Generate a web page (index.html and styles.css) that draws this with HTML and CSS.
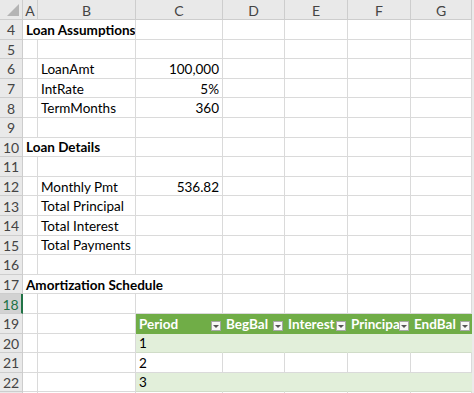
FILE: index.html
```html
<!DOCTYPE html>
<html>
<head>
    <title>Loan Amortization</title>
    <link rel="stylesheet" href="styles.css">
</head>
<body>
    <div class="sheet">
        <div class="corner"><svg width="12" height="12" viewBox="0 0 12 12"><polygon points="12,0 12,12 0,12" fill="#b4b4b4"/></svg></div>
        <div class="col-head">A</div>
        <div class="col-head">B</div>
        <div class="col-head">C</div>
        <div class="col-head">D</div>
        <div class="col-head">E</div>
        <div class="col-head">F</div>
        <div class="col-head">G</div>

        <div class="row-head">4</div>
        <div class="cell bold span2">Loan Assumptions</div>
        <div class="cell"></div><div class="cell"></div><div class="cell"></div><div class="cell"></div><div class="cell"></div>

        <div class="row-head">5</div>
        <div class="cell"></div><div class="cell"></div><div class="cell"></div><div class="cell"></div><div class="cell"></div><div class="cell"></div><div class="cell"></div>

        <div class="row-head">6</div>
        <div class="cell"></div><div class="cell">LoanAmt</div><div class="cell num">100,000</div>
        <div class="cell"></div><div class="cell"></div><div class="cell"></div><div class="cell"></div>

        <div class="row-head">7</div>
        <div class="cell"></div><div class="cell">IntRate</div><div class="cell num">5%</div>
        <div class="cell"></div><div class="cell"></div><div class="cell"></div><div class="cell"></div>

        <div class="row-head">8</div>
        <div class="cell"></div><div class="cell">TermMonths</div><div class="cell num">360</div>
        <div class="cell"></div><div class="cell"></div><div class="cell"></div><div class="cell"></div>

        <div class="row-head">9</div>
        <div class="cell"></div><div class="cell"></div><div class="cell"></div><div class="cell"></div><div class="cell"></div><div class="cell"></div><div class="cell"></div>

        <div class="row-head">10</div>
        <div class="cell bold span2">Loan Details</div>
        <div class="cell"></div><div class="cell"></div><div class="cell"></div><div class="cell"></div><div class="cell"></div>

        <div class="row-head">11</div>
        <div class="cell"></div><div class="cell"></div><div class="cell"></div><div class="cell"></div><div class="cell"></div><div class="cell"></div><div class="cell"></div>

        <div class="row-head">12</div>
        <div class="cell"></div><div class="cell">Monthly Pmt</div><div class="cell num">536.82</div>
        <div class="cell"></div><div class="cell"></div><div class="cell"></div><div class="cell"></div>

        <div class="row-head">13</div>
        <div class="cell"></div><div class="cell">Total Principal</div><div class="cell"></div>
        <div class="cell"></div><div class="cell"></div><div class="cell"></div><div class="cell"></div>

        <div class="row-head">14</div>
        <div class="cell"></div><div class="cell">Total Interest</div><div class="cell"></div>
        <div class="cell"></div><div class="cell"></div><div class="cell"></div><div class="cell"></div>

        <div class="row-head">15</div>
        <div class="cell"></div><div class="cell">Total Payments</div><div class="cell"></div>
        <div class="cell"></div><div class="cell"></div><div class="cell"></div><div class="cell"></div>

        <div class="row-head">16</div>
        <div class="cell"></div><div class="cell"></div><div class="cell"></div><div class="cell"></div><div class="cell"></div><div class="cell"></div><div class="cell"></div>

        <div class="row-head">17</div>
        <div class="cell bold span3">Amortization Schedule</div>
        <div class="cell"></div><div class="cell"></div><div class="cell"></div><div class="cell"></div>

        <div class="row-head active">18</div>
        <div class="cell"></div><div class="cell"></div><div class="cell"></div><div class="cell"></div><div class="cell"></div><div class="cell"></div><div class="cell"></div>

        <div class="row-head">19</div>
        <div class="cell"></div><div class="cell"></div>
        <div class="cell tbl-head"><span class="label">Period</span><span class="filter"></span></div>
        <div class="cell tbl-head"><span class="label">BegBal</span><span class="filter"></span></div>
        <div class="cell tbl-head"><span class="label">Interest</span><span class="filter"></span></div>
        <div class="cell tbl-head"><span class="label">Principal</span><span class="filter"></span></div>
        <div class="cell tbl-head"><span class="label">EndBal</span><span class="filter"></span></div>

        <div class="row-head">20</div>
        <div class="cell"></div><div class="cell"></div>
        <div class="cell band">1</div><div class="cell band"></div><div class="cell band"></div><div class="cell band"></div><div class="cell band"></div>

        <div class="row-head">21</div>
        <div class="cell"></div><div class="cell"></div>
        <div class="cell">2</div><div class="cell"></div><div class="cell"></div><div class="cell"></div><div class="cell"></div>

        <div class="row-head">22</div>
        <div class="cell"></div><div class="cell"></div>
        <div class="cell band">3</div><div class="cell band"></div><div class="cell band"></div><div class="cell band"></div><div class="cell band"></div>

        <div class="row-head"></div>
        <div class="cell"></div><div class="cell"></div>
        <div class="cell"></div><div class="cell"></div><div class="cell"></div><div class="cell"></div><div class="cell"></div>
    </div>
</body>
</html>
```

FILE: styles.css
```css
body {
    margin: 0;
    font-family: Lato, "Liberation Sans", sans-serif;
    font-size: 13.5px;
    color: #000;
}

.sheet {
    display: grid;
    grid-template-columns: 23px 15px 98px 87px 62px 63px 63px 61px;
    grid-template-rows: 20px;
    grid-auto-rows: 19.6px;
    width: 474px;
    height: 393px;
    overflow: hidden;
    background-color: #ebebeb;
}

.corner,
.col-head,
.row-head {
    box-sizing: border-box;
    display: flex;
    align-items: center;
    justify-content: center;
    background-color: #e9e9e9;
    color: #444;
    border-right: 1px solid #cdcdcd;
    border-bottom: 1px solid #cdcdcd;
}

    .corner {
        align-items: flex-end;
        justify-content: flex-end;
        padding: 0 3px 3px 0;
    }

    .col-head {
        font-size: 14px;
        padding-top: 1px;
    }

    .row-head {
        font-size: 14px;
        padding-top: 1px;
    }

        .row-head.active {
            background-color: #d2d2d2;
            color: #217346;
            border-right: 2px solid #217346;
        }

.cell {
    box-sizing: border-box;
    display: flex;
    align-items: center;
    padding: 1px 3px 0;
    background-color: #fff;
    border-right: 1px solid #dadada;
    border-bottom: 1px solid #dadada;
    white-space: nowrap;
    overflow: hidden;
}

    .cell.num {
        justify-content: flex-end;
    }

    .cell.bold {
        font-weight: 700;
    }

.span2 {
    grid-column: span 2;
}

.span3 {
    grid-column: span 3;
}

.tbl-head {
    background-color: #70ad47;
    color: #fff;
    font-weight: 700;
    border-right-color: #70ad47;
    border-bottom-color: #70ad47;
    padding-right: 1px;
}

    .tbl-head .label {
        flex: 1;
        min-width: 0;
        overflow: hidden;
    }

    .tbl-head .filter {
        flex: none;
        align-self: flex-end;
        box-sizing: border-box;
        width: 10px;
        height: 10px;
        margin-bottom: 2px;
        display: flex;
        align-items: center;
        justify-content: center;
        background-color: #f7f7f7;
        border: 1px solid #a6a6a6;
    }

        .tbl-head .filter::after {
            content: "";
            margin-top: 2px;
            border-left: 3px solid transparent;
            border-right: 3px solid transparent;
            border-top: 3px solid #555;
        }

.band {
    background-color: #e2efda;
    border-right-color: #e2efda;
    border-bottom-color: #d0dcc8;
}
```
